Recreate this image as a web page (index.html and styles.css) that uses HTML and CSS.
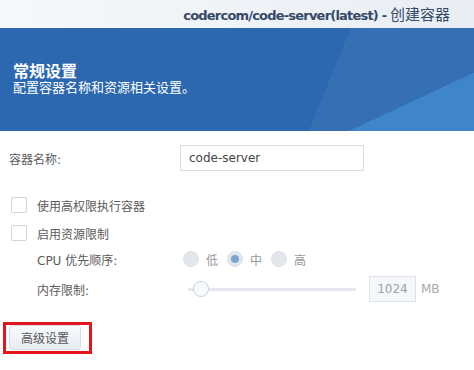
FILE: index.html
```html
<!DOCTYPE html>
<html lang="zh">
<head>
    <meta charset="UTF-8">
    <meta name="viewport" content="width=device-width, initial-scale=1.0">
    <title>创建容器</title>
    <link rel="stylesheet" href="styles.css">
</head>
<body>
    <div class="titlebar">codercom/code-server(latest) - <span class="cjk">创建容器</span></div>

    <div class="banner">
        <h1>常规设置</h1>
        <p>配置容器名称和资源相关设置。</p>
    </div>

    <div class="content">
        <div class="row row-name">
            <label class="label label-wide">容器名称:</label>
            <input class="text-input" type="text" value="code-server">
        </div>

        <div class="row row-check first-check">
            <span class="checkbox"></span>
            <span class="check-label">使用高权限执行容器</span>
        </div>
        <div class="row row-check">
            <span class="checkbox"></span>
            <span class="check-label">启用资源限制</span>
        </div>

        <div class="row row-sub row-cpu">
            <label class="label">CPU 优先顺序:</label>
            <div class="radios">
                <span class="radio"></span><span class="radio-label">低</span>
                <span class="radio checked"></span><span class="radio-label">中</span>
                <span class="radio"></span><span class="radio-label">高</span>
            </div>
        </div>

        <div class="row row-sub row-mem">
            <label class="label">内存限制:</label>
            <div class="slider">
                <span class="thumb"></span>
            </div>
            <span class="mem-box">1024</span>
            <span class="unit">MB</span>
        </div>

        <div class="highlight">
            <button class="btn">高级设置</button>
        </div>
    </div>
</body>
</html>
```

FILE: styles.css
```css
body {
    margin: 0;
    font-family: "DejaVu Sans", "Noto Sans CJK SC", sans-serif;
    font-size: 12px;
    color: #5a5a5a;
    background: #fff;
    width: 474px;
    height: 370px;
    overflow: hidden;
}
.titlebar {
    height: 28px;
    line-height: 27px;
    text-align: right;
    padding-right: 24px;
    font-size: 13px;
    font-weight: bold;
    color: #34496a;
    background: linear-gradient(to right, #f6f8fa, #e9eef4);
    letter-spacing: -0.8px;
}
.titlebar .cjk {
    font-family: "Noto Sans CJK SC", sans-serif;
    font-weight: normal;
    font-size: 15px;
    letter-spacing: 0;
}
.banner {
    height: 103px;
    box-sizing: border-box;
    padding: 33px 0 0 13px;
    color: #fff;
    background:
        linear-gradient(155deg, transparent 82%, rgba(70, 150, 220, 0.55) 82%),
        linear-gradient(112deg, transparent 68%, rgba(255, 255, 255, 0.05) 68%),
        #2b68af;
    font-family: "Noto Sans CJK SC", sans-serif;
}
.banner h1 {
    margin: 0;
    font-size: 16px;
    line-height: 18px;
    font-weight: bold;
}
.banner p {
    margin: 0;
    font-size: 13px;
    line-height: 16px;
}
.content {
    padding-top: 14px;
}
.row {
    display: flex;
    align-items: center;
}
.label {
    width: 146px;
    flex-shrink: 0;
}
.row-name {
    padding-left: 9px;
    height: 26px;
}
.label-wide {
    width: 171px;
}
.text-input {
    width: 184px;
    height: 26px;
    box-sizing: border-box;
    border: 1px solid #d8dde3;
    padding: 0 8px;
    font-family: "DejaVu Sans", sans-serif;
    font-size: 12px;
    color: #444;
    outline: none;
}
.row-check {
    padding-left: 11px;
    height: 28px;
}
.first-check {
    margin-top: 20px;
}
.checkbox {
    width: 16px;
    height: 16px;
    box-sizing: border-box;
    border: 1px solid #cfd5dc;
    border-radius: 2px;
    background: #fff;
    margin-right: 10px;
}
.row-sub {
    padding-left: 37px;
}
.row-cpu {
    height: 24px;
}
.radios {
    display: flex;
    align-items: center;
}
.radio {
    width: 16px;
    height: 16px;
    box-sizing: border-box;
    border-radius: 50%;
    background: #e3e7ec;
    border: 1px solid #dde2e8;
    position: relative;
}
.radio.checked {
    background: #dfe7f1;
}
.radio.checked::after {
    content: "";
    position: absolute;
    left: 3px;
    top: 3px;
    width: 8px;
    height: 8px;
    border-radius: 50%;
    background: #7fa3cf;
}
.radio-label {
    margin: 0 9px 0 7px;
    color: #999;
    font-family: "Noto Sans CJK SC", sans-serif;
}
.row-mem {
    margin-top: 4px;
    height: 28px;
}
.slider {
    position: relative;
    width: 168px;
    height: 3px;
    margin-left: 5px;
    background: #e4e8ed;
    border-radius: 2px;
}
.thumb {
    position: absolute;
    left: 5px;
    top: -7px;
    width: 16px;
    height: 16px;
    box-sizing: border-box;
    border-radius: 50%;
    border: 1px solid #ccd3db;
    background: #f7f9fb;
}
.mem-box {
    margin-left: 13px;
    width: 47px;
    height: 26px;
    box-sizing: border-box;
    border: 1px solid #dfe4ea;
    background: #f5f7fa;
    color: #9aa3ad;
    line-height: 24px;
    text-align: center;
}
.unit {
    margin-left: 5px;
    color: #a3aab2;
}
.highlight {
    display: inline-block;
    margin: 19px 0 0 3px;
    border: 3px solid #e3141b;
    padding: 0 8px 1px 3px;
}
.btn {
    display: block;
    width: 72px;
    height: 25px;
    border: 1px solid #d6dde5;
    border-radius: 3px;
    background: linear-gradient(#f8fafc, #e8edf2);
    color: #555;
    font-family: "Noto Sans CJK SC", sans-serif;
    font-size: 12px;
    padding: 0;
}
```
